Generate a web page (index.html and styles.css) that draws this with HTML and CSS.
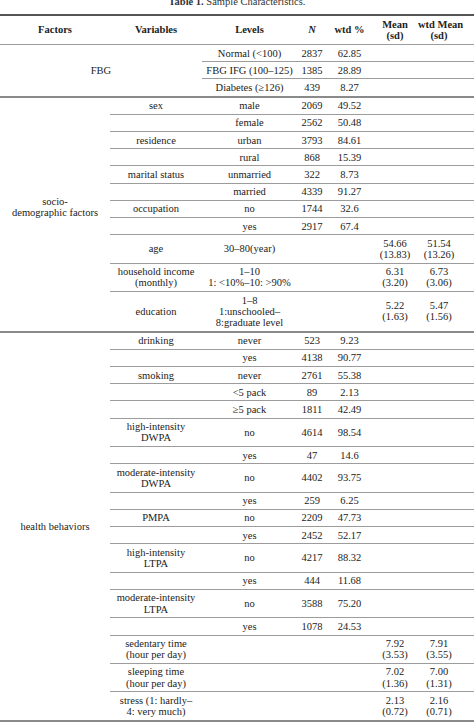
FILE: index.html
```html
<!DOCTYPE html>
<html lang="en">
<head>
<meta charset="utf-8">
<title>Table 1. Sample Characteristics.</title>
<link rel="stylesheet" href="styles.css">
</head>
<body>
<div class="title"><b>Table 1.</b> Sample Characteristics.</div>
<table class="tbl">
  <colgroup>
    <col class="c1"><col class="c2"><col class="c3"><col class="c4"><col class="c5"><col class="c6"><col class="c7">
  </colgroup>
  <thead>
    <tr>
      <th>Factors</th>
      <th>Variables</th>
      <th>Levels</th>
      <th><i>N</i></th>
      <th>wtd %</th>
      <th>Mean<br>(sd)</th>
      <th class="last">wtd Mean<br>(sd)</th>
    </tr>
  </thead>
  <tbody>
    <tr>
      <td class="factor" colspan="2" rowspan="3">FBG</td>
      <td>Normal (&lt;100)</td><td>2837</td><td>62.85</td><td></td><td class="last"></td>
    </tr>
    <tr><td>FBG IFG (100–125)</td><td>1385</td><td>28.89</td><td></td><td class="last"></td></tr>
    <tr class="end"><td>Diabetes (≥126)</td><td>439</td><td>8.27</td><td></td><td class="last"></td></tr>

    <tr>
      <td class="factor up" rowspan="11">socio-<br>demographic factors</td>
      <td>sex</td><td>male</td><td>2069</td><td>49.52</td><td></td><td class="last"></td>
    </tr>
    <tr><td></td><td>female</td><td>2562</td><td>50.48</td><td></td><td class="last"></td></tr>
    <tr><td>residence</td><td>urban</td><td>3793</td><td>84.61</td><td></td><td class="last"></td></tr>
    <tr><td></td><td>rural</td><td>868</td><td>15.39</td><td></td><td class="last"></td></tr>
    <tr><td>marital status</td><td>unmarried</td><td>322</td><td>8.73</td><td></td><td class="last"></td></tr>
    <tr><td></td><td>married</td><td>4339</td><td>91.27</td><td></td><td class="last"></td></tr>
    <tr><td>occupation</td><td>no</td><td>1744</td><td>32.6</td><td></td><td class="last"></td></tr>
    <tr><td></td><td>yes</td><td>2917</td><td>67.4</td><td></td><td class="last"></td></tr>
    <tr><td>age</td><td>30–80(year)</td><td></td><td></td><td>54.66<br>(13.83)</td><td class="last">51.54<br>(13.26)</td></tr>
    <tr><td>household income<br>(monthly)</td><td>1–10<br>1: &lt;10%–10: &gt;90%</td><td></td><td></td><td>6.31<br>(3.20)</td><td class="last">6.73<br>(3.06)</td></tr>
    <tr class="end"><td>education</td><td>1–8<br>1:unschooled–<br>8:graduate level</td><td></td><td></td><td>5.22<br>(1.63)</td><td class="last">5.47<br>(1.56)</td></tr>

    <tr>
      <td class="factor" rowspan="19">health behaviors</td>
      <td>drinking</td><td>never</td><td>523</td><td>9.23</td><td></td><td class="last"></td>
    </tr>
    <tr><td></td><td>yes</td><td>4138</td><td>90.77</td><td></td><td class="last"></td></tr>
    <tr><td>smoking</td><td>never</td><td>2761</td><td>55.38</td><td></td><td class="last"></td></tr>
    <tr><td></td><td>&lt;5 pack</td><td>89</td><td>2.13</td><td></td><td class="last"></td></tr>
    <tr><td></td><td>≥5 pack</td><td>1811</td><td>42.49</td><td></td><td class="last"></td></tr>
    <tr><td>high-intensity<br>DWPA</td><td>no</td><td>4614</td><td>98.54</td><td></td><td class="last"></td></tr>
    <tr><td></td><td>yes</td><td>47</td><td>14.6</td><td></td><td class="last"></td></tr>
    <tr><td>moderate-intensity<br>DWPA</td><td>no</td><td>4402</td><td>93.75</td><td></td><td class="last"></td></tr>
    <tr><td></td><td>yes</td><td>259</td><td>6.25</td><td></td><td class="last"></td></tr>
    <tr><td>PMPA</td><td>no</td><td>2209</td><td>47.73</td><td></td><td class="last"></td></tr>
    <tr><td></td><td>yes</td><td>2452</td><td>52.17</td><td></td><td class="last"></td></tr>
    <tr><td>high-intensity<br>LTPA</td><td>no</td><td>4217</td><td>88.32</td><td></td><td class="last"></td></tr>
    <tr><td></td><td>yes</td><td>444</td><td>11.68</td><td></td><td class="last"></td></tr>
    <tr><td>moderate-intensity<br>LTPA</td><td>no</td><td>3588</td><td>75.20</td><td></td><td class="last"></td></tr>
    <tr><td></td><td>yes</td><td>1078</td><td>24.53</td><td></td><td class="last"></td></tr>
    <tr><td>sedentary time<br>(hour per day)</td><td></td><td></td><td></td><td>7.92<br>(3.53)</td><td class="last">7.91<br>(3.55)</td></tr>
    <tr><td>sleeping time<br>(hour per day)</td><td></td><td></td><td></td><td>7.02<br>(1.36)</td><td class="last">7.00<br>(1.31)</td></tr>
    <tr class="end"><td>stress (1: hardly–<br>4: very much)</td><td></td><td></td><td></td><td>2.13<br>(0.72)</td><td class="last">2.16<br>(0.71)</td></tr>
  </tbody>
</table>
</body>
</html>
```

FILE: styles.css
```css
html, body {
  margin: 0;
  padding: 0;
  background: #ffffff;
}

body {
  font-family: "Liberation Serif", "Times New Roman", serif;
  font-size: 10.5px;
  color: #222222;
  width: 474px;
  overflow: hidden;
}

.title {
  margin-top: -4px;
  height: 12px;
  line-height: 12px;
  text-align: center;
  font-size: 10.5px;
  color: #333333;
}

.tbl {
  margin-top: 6px;
  width: 474px;
  table-layout: fixed;
  border-collapse: collapse;
  border-top: 2px solid #555555;
}

.c1 { width: 110px; }
.c2 { width: 92px; }
.c3 { width: 95px; }
.c4 { width: 30px; }
.c5 { width: 45px; }
.c6 { width: 46px; }
.c7 { width: 56px; }

.tbl th,
.tbl td {
  padding: 2.5px 0;
  line-height: 11.2px;
  text-align: center;
  vertical-align: middle;
  white-space: nowrap;
  border-bottom: 1px solid #9c9c9c;
}

.tbl th {
  font-weight: bold;
  color: #222222;
  padding: 2.8px 0;
}

.tbl th i {
  font-style: italic;
}

.tbl .last {
  padding-right: 14px;
}

.tbl tr.end td,
.tbl td.factor {
  border-bottom: 2px solid #8a8a8a;
}

.tbl td.up {
  padding-bottom: 16px;
}
```
